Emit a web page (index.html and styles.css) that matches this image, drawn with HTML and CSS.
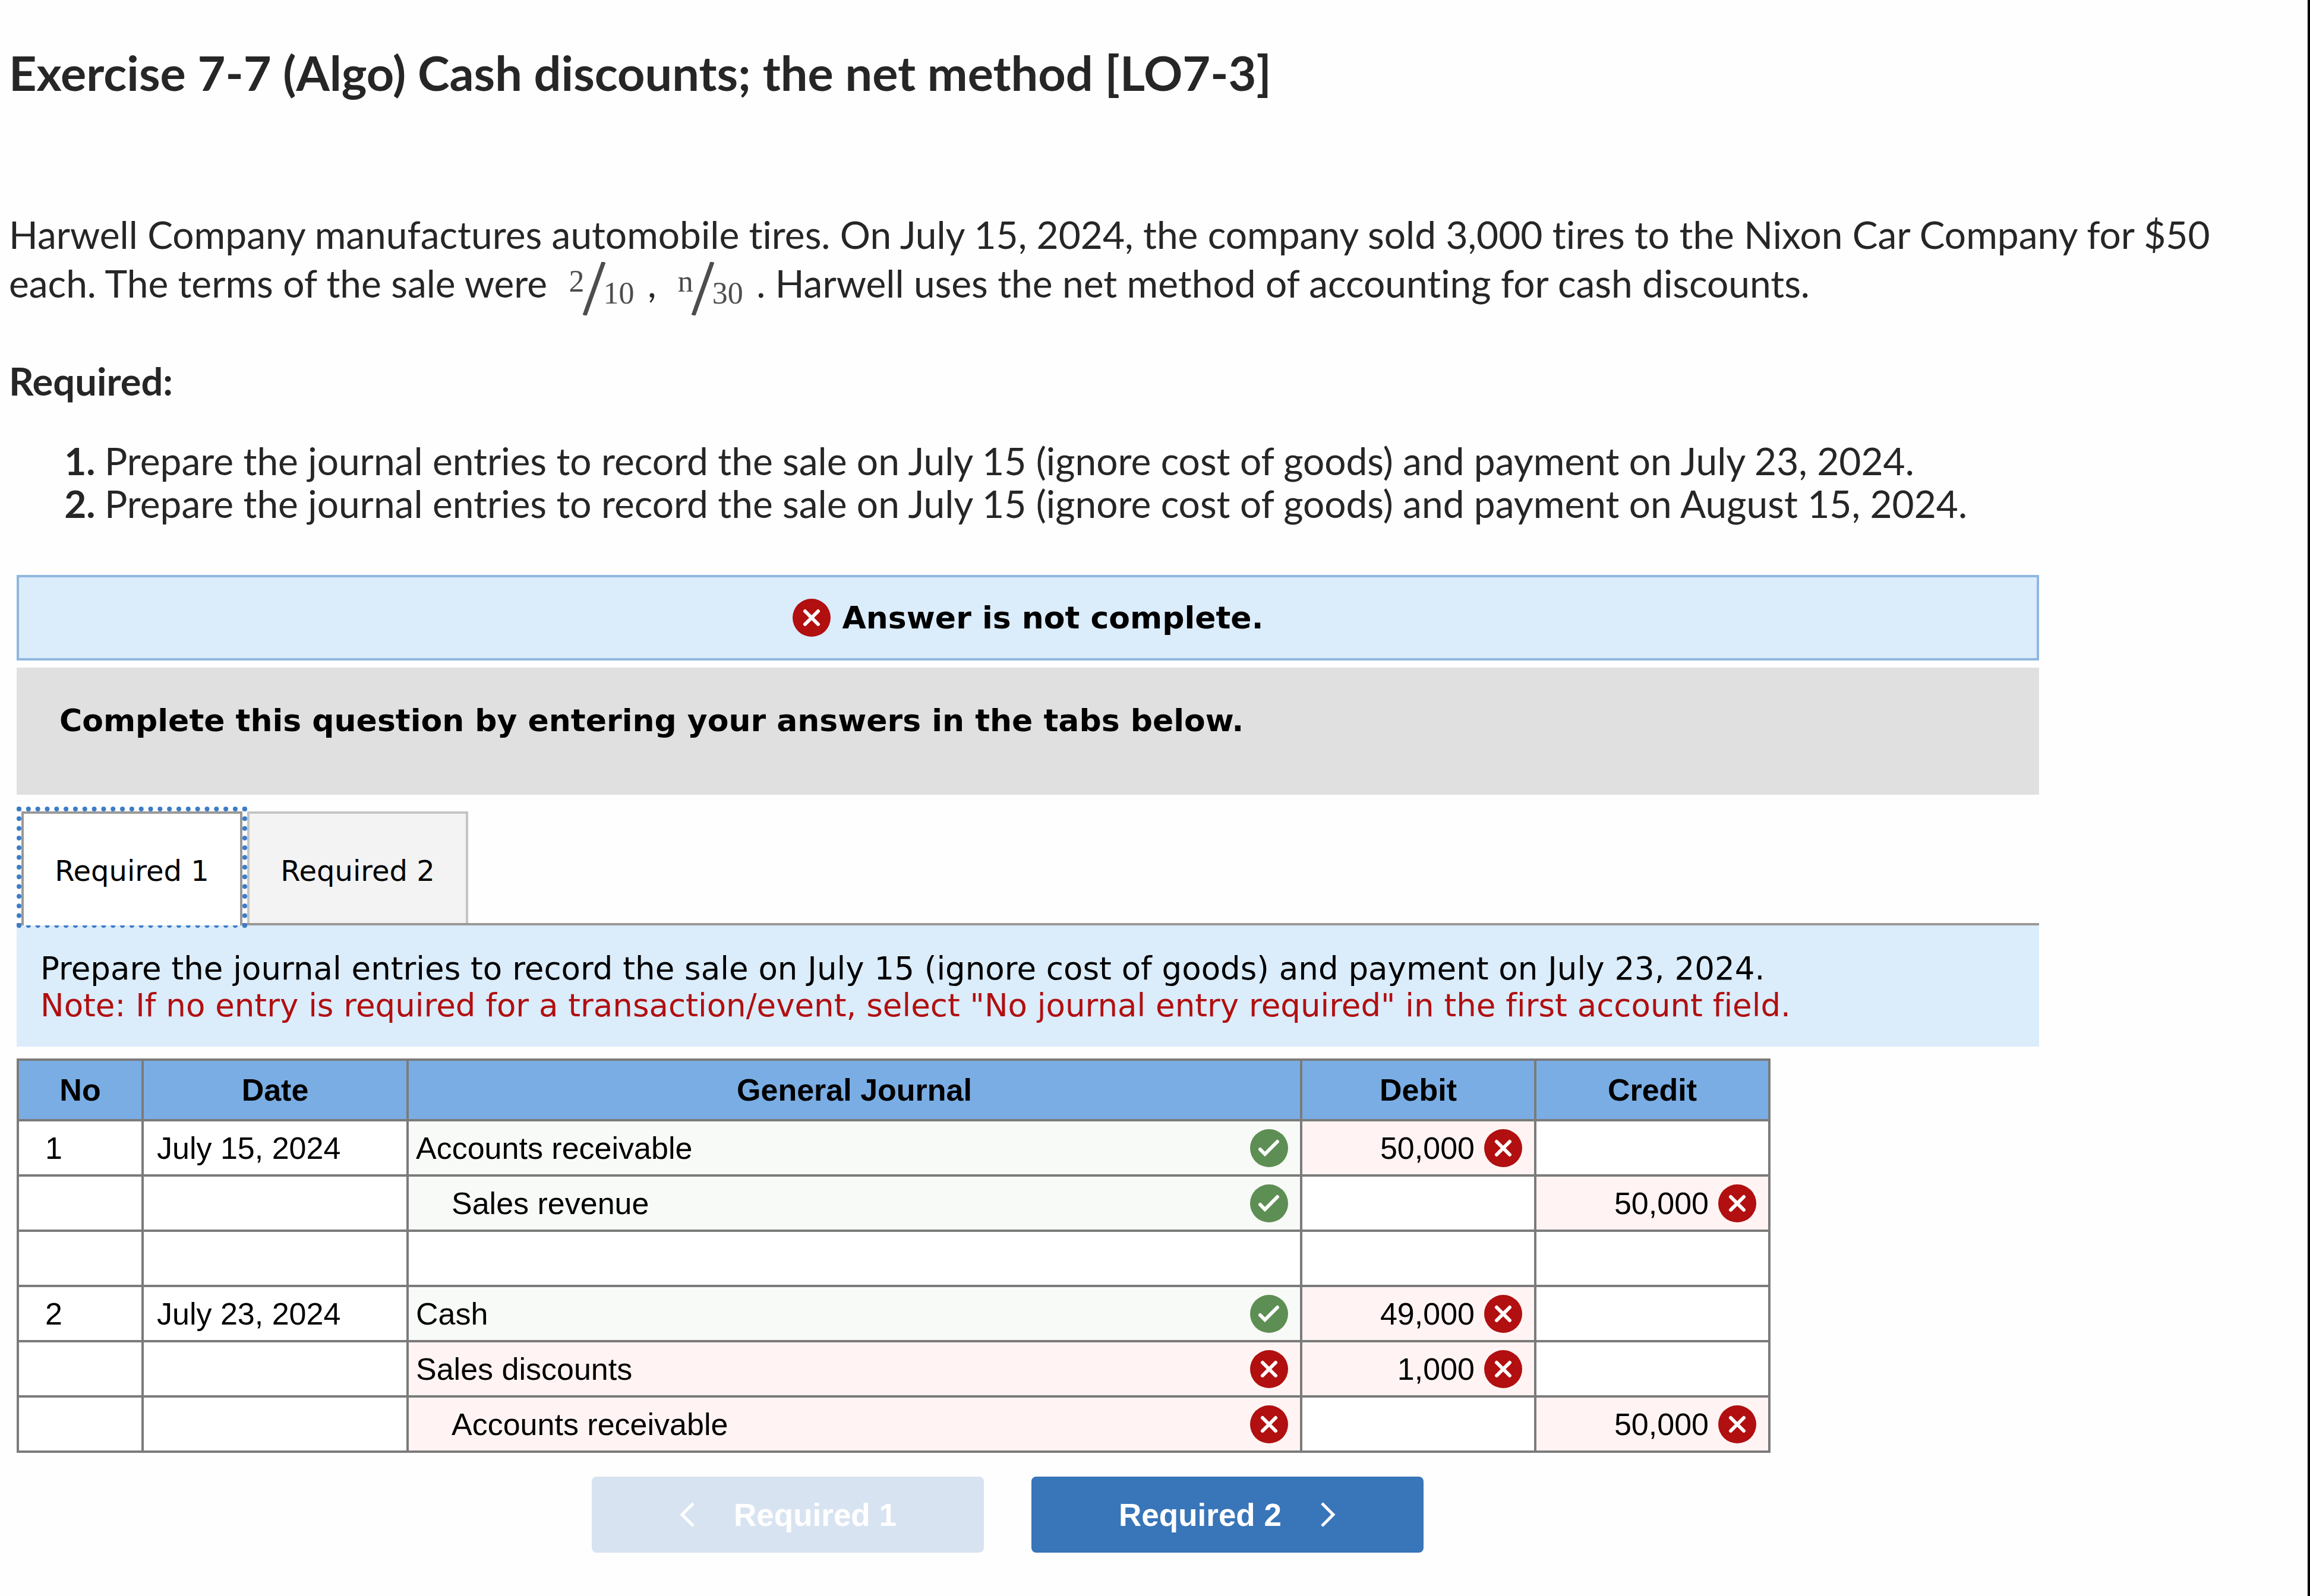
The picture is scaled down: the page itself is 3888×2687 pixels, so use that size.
FILE: index.html
```html
<!DOCTYPE html>
<html lang="en">
<head>
  <meta charset="UTF-8" />
  <meta name="viewport" content="width=device-width, initial-scale=1.0"/>
  <title>Exercise 7-7 (Algo) Cash discounts</title>
  <link rel="stylesheet" href="styles.css">
</head>
<body>

<!-- Icons used more than once -->
<svg class="sprite" aria-hidden="true">
  <symbol id="wrong" viewBox="0 0 64 64">
    <circle cx="32" cy="32" r="32" fill="#b10f10"/>
    <path d="M21 21L43 43M43 21L21 43" fill="none" stroke="#fff" stroke-width="6" stroke-linecap="round"/>
  </symbol>
  <symbol id="right" viewBox="0 0 64 64">
    <circle cx="32" cy="32" r="32" fill="#5d8e53"/>
    <path d="M17 34L25 42L46 21" fill="none" stroke="#fff" stroke-width="6" stroke-linecap="round"/>
  </symbol>
  <symbol id="slash" viewBox="0 0 40 90">
    <path d="M36 0L4 90" fill="none" stroke="#4d4d4d" stroke-width="7"/>
  </symbol>
</svg>

<!-- Question -->
<main>
  <div class="question">
    <h1>Exercise 7-7 (Algo) Cash discounts; the net method [LO7-3]</h1>
    <p>Harwell Company manufactures automobile tires. On July 15, 2024, the company sold 3,000 tires to the Nixon Car Company for $50<br>
      each. The terms of the sale were <span class="frac"><sup>2</sup><svg><use href="#slash"/></svg><sub>10</sub></span> , <span class="frac"><sup>n</sup><svg><use href="#slash"/></svg><sub>30</sub></span> . Harwell uses the net method of accounting for cash discounts.</p>
    <h2>Required:</h2>
    <ol>
      <li>Prepare the journal entries to record the sale on July 15 (ignore cost of goods) and payment on July 23, 2024.</li>
      <li>Prepare the journal entries to record the sale on July 15 (ignore cost of goods) and payment on August 15, 2024.</li>
    </ol>
  </div>

  <!-- Answer area -->
  <section class="answer">
    <div class="status">
      <svg class="icon"><use href="#wrong"/></svg>
      <span>Answer is not complete.</span>
    </div>
    <div class="hint">Complete this question by entering your answers in the tabs below.</div>

    <div class="tabs" role="tablist">
      <button class="tab active" role="tab" aria-selected="true">Required 1</button>
      <button class="tab" role="tab" aria-selected="false">Required 2</button>
    </div>
    <div class="instructions">
      <div>Prepare the journal entries to record the sale on July 15 (ignore cost of goods) and payment on July 23, 2024.</div>
      <div class="note">Note: If no entry is required for a transaction/event, select "No journal entry required" in the first account field.</div>
    </div>

    <table>
      <colgroup>
        <col class="col-no">
        <col class="col-date">
        <col>
        <col class="col-amount">
        <col class="col-amount">
      </colgroup>
      <thead>
        <tr><th>No</th><th>Date</th><th>General Journal</th><th>Debit</th><th>Credit</th></tr>
      </thead>
      <tbody>
        <tr>
          <td class="no">1</td>
          <td class="date">July 15, 2024</td>
          <td class="good"><div class="entry"><span>Accounts receivable</span><svg class="icon"><use href="#right"/></svg></div></td>
          <td class="bad"><div class="amount"><span>50,000</span><svg class="icon"><use href="#wrong"/></svg></div></td>
          <td></td>
        </tr>
        <tr>
          <td></td>
          <td></td>
          <td class="good"><div class="entry indent"><span>Sales revenue</span><svg class="icon"><use href="#right"/></svg></div></td>
          <td></td>
          <td class="bad"><div class="amount"><span>50,000</span><svg class="icon"><use href="#wrong"/></svg></div></td>
        </tr>
        <tr>
          <td></td>
          <td></td>
          <td></td>
          <td></td>
          <td></td>
        </tr>
        <tr>
          <td class="no">2</td>
          <td class="date">July 23, 2024</td>
          <td class="good"><div class="entry"><span>Cash</span><svg class="icon"><use href="#right"/></svg></div></td>
          <td class="bad"><div class="amount"><span>49,000</span><svg class="icon"><use href="#wrong"/></svg></div></td>
          <td></td>
        </tr>
        <tr>
          <td></td>
          <td></td>
          <td class="bad"><div class="entry"><span>Sales discounts</span><svg class="icon"><use href="#wrong"/></svg></div></td>
          <td class="bad"><div class="amount"><span>1,000</span><svg class="icon"><use href="#wrong"/></svg></div></td>
          <td></td>
        </tr>
        <tr>
          <td></td>
          <td></td>
          <td class="bad"><div class="entry indent"><span>Accounts receivable</span><svg class="icon"><use href="#wrong"/></svg></div></td>
          <td></td>
          <td class="bad"><div class="amount"><span>50,000</span><svg class="icon"><use href="#wrong"/></svg></div></td>
        </tr>
      </tbody>
    </table>

    <div class="nav">
      <button class="nav-btn" disabled>
        <svg class="chevron" viewBox="0 0 28 44"><path d="M24 3L5 22L24 41"/></svg>
        Required 1
      </button>
      <button class="nav-btn">
        Required 2
        <svg class="chevron" viewBox="0 0 28 44"><path d="M4 3L23 22L4 41"/></svg>
      </button>
    </div>
  </section>
</main>

</body>
</html>
```
FILE: styles.css
```css
:root {
  --text: #262626;
  --panel: #dbecfb;
  --line: #7b7b7b;
  --blue: #3875b9;
  --red: #b10f10;
}

* {
  box-sizing: border-box;
}

body {
  margin: 0;
  min-height: 100vh;
  border-right: 4px solid #000;
  background: #fefefe;
  color: var(--text);
  font-family: Lato, "Open Sans", sans-serif;
  font-variant-ligatures: none;
}

.sprite {
  position: absolute;
  width: 0;
  height: 0;
}

main {
  padding: 74px 0 72px;
}

/* Question text */
.question {
  padding-left: 15px;
  font-size: 64px;
  line-height: 82px;
}

h1 {
  margin: 0 0 184px;
  font-size: 81px;
  line-height: 96px;
}

p {
  margin: 0;
}

h2 {
  margin: 82px 0 58px;
  font-size: 65px;
  line-height: 82px;
}

ol {
  margin: 0;
  padding-left: 161px;
  line-height: 72px;
}

li::marker {
  font-weight: bold;
}

.frac {
  margin: 0 6px 0 20px;
  color: #4d4d4d;
  font-family: "Liberation Serif", serif;
  font-size: 52px;
  line-height: 0;
  white-space: nowrap;
}

.frac sup, .frac sub {
  font-size: 52px;
}

.frac sup {
  vertical-align: 10px;
}

.frac sub {
  vertical-align: -10px;
}

.frac svg {
  width: 40px;
  height: 90px;
  margin: -20px -4px;
  vertical-align: -10px;
}

/* Answer area */
.answer {
  margin: 84px 452px 0 28px;
  color: #000;
  font-family: Verdana, "DejaVu Sans", sans-serif;
  font-size: 52px;
  line-height: 62px;
}

.icon {
  flex: none;
  display: block;
  width: 64px;
  height: 64px;
}

.status {
  display: flex;
  align-items: center;
  justify-content: center;
  gap: 20px;
  height: 144px;
  border: 4px solid #8fb7df;
  background: var(--panel);
  font-weight: bold;
}

.hint {
  margin-top: 12px;
  padding: 58px 72px 94px;
  background: #e0e0e0;
  font-weight: bold;
}

.tabs {
  display: flex;
  gap: 8px;
  margin-top: 28px;
  padding-left: 8px;
  border-bottom: 4px solid #999;
}

.tab {
  position: relative;
  width: 372px;
  height: 188px;
  padding: 8px 0 0;
  border: 4px solid #c4c4c4;
  border-bottom: 0;
  background: #f3f3f3;
  color: #000;
  font-family: inherit;
  font-size: 48px;
}

.tab.active {
  border-color: #999;
  background: #fff;
  outline: 8px dotted #3c7cc8;
}

/* hides the strip's line below the open tab */
.tab.active::after {
  content: "";
  position: absolute;
  left: -4px;
  right: -4px;
  bottom: -4px;
  height: 4px;
  border: solid #999;
  border-width: 0 4px;
  background: #fff;
}

.instructions {
  padding: 42px 40px 38px;
  background: var(--panel);
  font-size: 53px;
}

.note {
  color: var(--red);
}

/* Journal table */
table {
  width: calc(100% - 452px);
  margin-top: 20px;
  border-collapse: collapse;
  table-layout: fixed;
  font-family: Arial, "Liberation Sans", sans-serif;
  line-height: 60px;
}

.col-no {
  width: 210px;
}

.col-date {
  width: 446px;
}

.col-amount {
  width: 394px;
}

th, td {
  height: 93px;
  padding: 0;
  border: 4px solid var(--line);
}

th {
  height: 102px;
  background: #7aade4;
}

td {
  background: #fff;
}

.no {
  padding-left: 44px;
}

.date {
  padding-left: 22px;
}

.good {
  background: #f8faf7;
}

.bad {
  background: #fff4f3;
}

.entry, .amount {
  display: flex;
  align-items: center;
  justify-content: space-between;
  padding: 0 20px 0 12px;
}

.indent {
  padding-left: 72px;
}

.amount {
  justify-content: flex-end;
  gap: 16px;
}

/* Previous / next */
.nav {
  display: flex;
  justify-content: center;
  gap: 80px;
  margin-top: 40px;
  padding-right: 68px;
}

.nav-btn {
  display: flex;
  align-items: center;
  justify-content: center;
  gap: 64px;
  width: 660px;
  height: 128px;
  border: 0;
  border-radius: 8px;
  background: var(--blue);
  color: #fff;
  font: bold 53px Arial, "Liberation Sans", sans-serif;
}

.nav-btn:disabled {
  background: #d8e3f1;
}

.chevron {
  width: 28px;
  height: 44px;
  fill: none;
  stroke: currentColor;
  stroke-width: 5;
}
```
